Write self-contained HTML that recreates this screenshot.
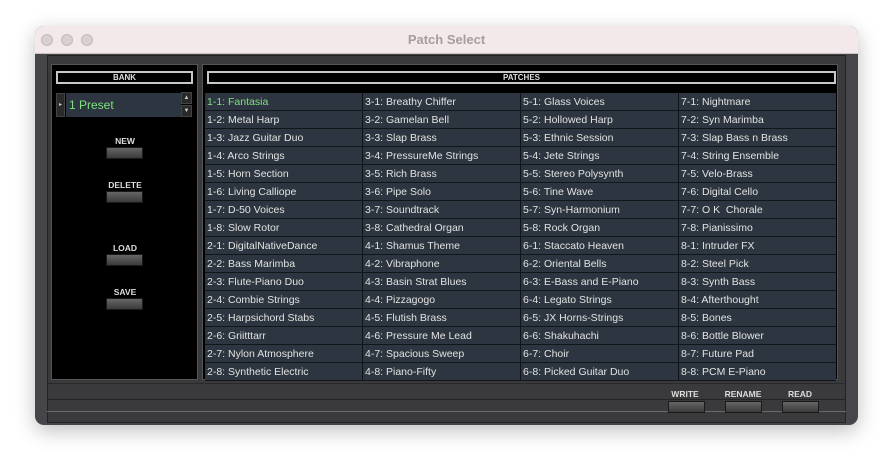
<!DOCTYPE html><html><head><style>
*{margin:0;padding:0;box-sizing:border-box}
body{width:892px;height:468px;background:#fff;position:relative;font-family:"Liberation Sans",sans-serif;overflow:hidden}
.win{position:absolute;left:35px;top:26px;width:823px;height:399px;border-radius:9px;background:#46464a;box-shadow:0 6px 20px rgba(0,0,0,.25);overflow:hidden}
.title{position:absolute;left:0;top:0;width:100%;height:28px;background:#f3e9ea;border-bottom:1px solid #cbbfc0;text-align:center;font-size:13px;font-weight:bold;color:#a59d9e;line-height:28px}
.dot{position:absolute;top:8px;width:12px;height:12px;border-radius:50%;background:#d7cfd0;border:1px solid #c3babb}
.body{position:absolute;left:12px;top:29px;width:799px;height:368px;background:#3a3a3d;border:1px solid #222}
.lp{position:absolute;left:16px;top:38px;width:147px;height:316px;background:#000;border:1px solid #555}
.rp{position:absolute;left:167px;top:38px;width:636px;height:316px;background:#000;border:1px solid #555}
.hdr{position:absolute;height:13px;border:2px solid #c8c8c8;background:#000;color:#ddd;font-size:8px;font-weight:bold;text-align:center;line-height:9px}
.btn{position:absolute;width:37px;height:12px;background:linear-gradient(#666,#3b3b3b);border:1px solid #1a1a1a}
.lbl{position:absolute;color:#ddd;font-size:8.5px;font-weight:bold;text-align:center;width:60px}
.grid{position:absolute;left:170px;top:67px;display:grid;grid-template-columns:157px 157px 157px 157px;grid-auto-rows:18px;column-gap:1px;background:#0f1418}
.c{background:#2d3640;border-bottom:1px solid #10161a;color:#e2e2e2;font-size:10.5px;line-height:19px;padding-left:2px;white-space:nowrap}
.g{color:#7fe07f}
</style></head><body>
<div class="win">
<div class="title">Patch Select</div>
<div class="dot" style="left:6px"></div><div class="dot" style="left:26px"></div><div class="dot" style="left:46px"></div>
<div class="body"></div>
<div class="lp"></div><div class="rp"></div>
<div class="hdr" style="left:21px;top:45px;width:137px">BANK</div>
<div class="hdr" style="left:172px;top:45px;width:629px">PATCHES</div>
<div style="position:absolute;left:21px;top:67px;width:9px;height:24px;background:#2a2a2a;border:1px solid #444;color:#ccc;font-size:6px;line-height:22px;text-align:center">▸</div>
<div style="position:absolute;left:31px;top:67px;width:115px;height:24px;background:#2d3640;color:#7fe07f;font-size:12px;line-height:25px;padding-left:3px">1 Preset</div>
<div style="position:absolute;left:146px;top:66px;width:11px;height:12px;background:#2a2a2a;border:1px solid #444;color:#ccc;font-size:6px;text-align:center;line-height:10px">▲</div>
<div style="position:absolute;left:146px;top:79px;width:11px;height:12px;background:#2a2a2a;border:1px solid #444;color:#ccc;font-size:6px;text-align:center;line-height:10px">▼</div>
<div class="lbl" style="left:60px;top:110px">NEW</div><div class="btn" style="left:71px;top:121px"></div>
<div class="lbl" style="left:60px;top:154px">DELETE</div><div class="btn" style="left:71px;top:165px"></div>
<div class="lbl" style="left:60px;top:217px">LOAD</div><div class="btn" style="left:71px;top:228px"></div>
<div class="lbl" style="left:60px;top:261px">SAVE</div><div class="btn" style="left:71px;top:272px"></div>
<div style="position:absolute;left:12px;top:357px;width:799px;height:1px;background:#2a2a2c"></div>
<div style="position:absolute;left:12px;top:373px;width:799px;height:1px;background:#232325"></div>
<div style="position:absolute;left:12px;top:385px;width:799px;height:1px;background:#6a6a6c"></div>
<div class="lbl" style="left:620px;top:363px">WRITE</div><div class="btn" style="left:633px;top:375px"></div>
<div class="lbl" style="left:678px;top:363px">RENAME</div><div class="btn" style="left:690px;top:375px"></div>
<div class="lbl" style="left:735px;top:363px">READ</div><div class="btn" style="left:747px;top:375px"></div>
<div class="grid">
<div class="c g">1-1: Fantasia</div><div class="c">3-1: Breathy Chiffer</div><div class="c">5-1: Glass Voices</div><div class="c">7-1: Nightmare</div>
<div class="c">1-2: Metal Harp</div><div class="c">3-2: Gamelan Bell</div><div class="c">5-2: Hollowed Harp</div><div class="c">7-2: Syn Marimba</div>
<div class="c">1-3: Jazz Guitar Duo</div><div class="c">3-3: Slap Brass</div><div class="c">5-3: Ethnic Session</div><div class="c">7-3: Slap Bass n Brass</div>
<div class="c">1-4: Arco Strings</div><div class="c">3-4: PressureMe Strings</div><div class="c">5-4: Jete Strings</div><div class="c">7-4: String Ensemble</div>
<div class="c">1-5: Horn Section</div><div class="c">3-5: Rich Brass</div><div class="c">5-5: Stereo Polysynth</div><div class="c">7-5: Velo-Brass</div>
<div class="c">1-6: Living Calliope</div><div class="c">3-6: Pipe Solo</div><div class="c">5-6: Tine Wave</div><div class="c">7-6: Digital Cello</div>
<div class="c">1-7: D-50 Voices</div><div class="c">3-7: Soundtrack</div><div class="c">5-7: Syn-Harmonium</div><div class="c">7-7: O K &nbsp;Chorale</div>
<div class="c">1-8: Slow Rotor</div><div class="c">3-8: Cathedral Organ</div><div class="c">5-8: Rock Organ</div><div class="c">7-8: Pianissimo</div>
<div class="c">2-1: DigitalNativeDance</div><div class="c">4-1: Shamus Theme</div><div class="c">6-1: Staccato Heaven</div><div class="c">8-1: Intruder FX</div>
<div class="c">2-2: Bass Marimba</div><div class="c">4-2: Vibraphone</div><div class="c">6-2: Oriental Bells</div><div class="c">8-2: Steel Pick</div>
<div class="c">2-3: Flute-Piano Duo</div><div class="c">4-3: Basin Strat Blues</div><div class="c">6-3: E-Bass and E-Piano</div><div class="c">8-3: Synth Bass</div>
<div class="c">2-4: Combie Strings</div><div class="c">4-4: Pizzagogo</div><div class="c">6-4: Legato Strings</div><div class="c">8-4: Afterthought</div>
<div class="c">2-5: Harpsichord Stabs</div><div class="c">4-5: Flutish Brass</div><div class="c">6-5: JX Horns-Strings</div><div class="c">8-5: Bones</div>
<div class="c">2-6: Griitttarr</div><div class="c">4-6: Pressure Me Lead</div><div class="c">6-6: Shakuhachi</div><div class="c">8-6: Bottle Blower</div>
<div class="c">2-7: Nylon Atmosphere</div><div class="c">4-7: Spacious Sweep</div><div class="c">6-7: Choir</div><div class="c">8-7: Future Pad</div>
<div class="c">2-8: Synthetic Electric</div><div class="c">4-8: Piano-Fifty</div><div class="c">6-8: Picked Guitar Duo</div><div class="c">8-8: PCM E-Piano</div>
</div>
</div>
</body></html>
